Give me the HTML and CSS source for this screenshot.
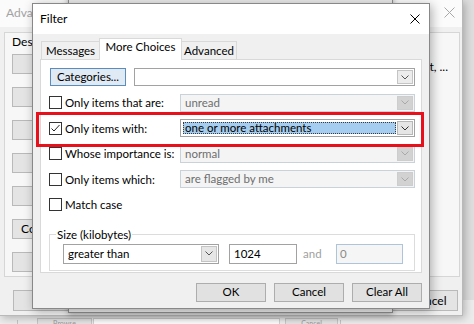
FILE: index.html
```html
<!DOCTYPE html>
<html>
<head>
<meta charset="utf-8">
<title>Filter</title>
<link rel="stylesheet" href="styles.css">
</head>
<body>
<div class="desk">
  <div class="lowwin">
    <span class="lowline"></span>
    <span class="lowbtn lb1">Browse</span>
    <span class="lowfield"></span>
    <span class="lowbtn lb2">Cancel</span>
    <span class="lowline"></span>
  </div>

  <div class="bgwin">
    <div class="bgtitle">
      <span class="bgname">Advanced Find</span>
      <svg class="bgx" width="11" height="11" viewBox="0 0 11 11"><path d="M0.5 0.5L10.5 10.5M10.5 0.5L0.5 10.5" stroke="#a8a8a8" stroke-width="1" fill="none"/></svg>
    </div>
    <div class="bgpanel">
      <div class="bgleft">
        <div class="bglabel">Description</div>
        <div class="bgbtns">
          <span class="bgbtn"></span>
          <span class="bgbtn"></span>
          <span class="bgbtn"></span>
          <span class="bgbtn"></span>
          <span class="bgbtn"></span>
          <span class="bgbtn">Copy</span>
          <span class="bgbtn"></span>
        </div>
      </div>
      <div class="bgright"><span>Look for items with the text, ...</span></div>
    </div>
    <div class="bgfoot">
      <span class="bgbtn"></span>
      <span class="bgbtn bgcancel">Cancel</span>
    </div>
  </div>

  <div class="midwin"></div>

  <div class="dialog">
    <div class="dtitle">
      <span>Filter</span>
      <svg width="10" height="10" viewBox="0 0 10 10"><path d="M0.5 0.5L9.5 9.5M9.5 0.5L0.5 9.5" stroke="#000" stroke-width="1" fill="none"/></svg>
    </div>
    <div class="dbody">
      <div class="tabs">
        <span class="tab t1">Messages</span>
        <span class="tab t2 active">More Choices</span>
        <span class="tab t3">Advanced</span>
      </div>
      <div class="panel">
        <div class="row">
          <span class="catbtn">Categories...</span>
          <span class="combo">
            <span class="val"></span>
            <span class="arr"><svg width="8" height="5" viewBox="0 0 8 5"><path d="M0.5 0.5L4 4L7.5 0.5" stroke="#555" fill="none"/></svg></span>
          </span>
        </div>
        <div class="row">
          <span class="lbl"><span class="cb"></span>Only items that are:</span>
          <span class="combo dis">
            <span class="val">unread</span>
            <span class="arr"><svg width="8" height="5" viewBox="0 0 8 5"><path d="M0.5 0.5L4 4L7.5 0.5" stroke="#a9a9a9" fill="none"/></svg></span>
          </span>
        </div>
        <div class="row">
          <span class="lbl"><span class="cb"><svg width="11" height="11" viewBox="0 0 11 11"><path d="M1.5 5.5L4 8L9.5 2" stroke="#222" stroke-width="1" fill="none"/></svg></span>Only items with:</span>
          <span class="combo on">
            <span class="val"><span class="sel">one or more attachments</span></span>
            <span class="arr"><svg width="8" height="5" viewBox="0 0 8 5"><path d="M0.5 0.5L4 4L7.5 0.5" stroke="#333" fill="none"/></svg></span>
          </span>
        </div>
        <div class="row">
          <span class="lbl"><span class="cb"></span>Whose importance is:</span>
          <span class="combo dis">
            <span class="val">normal</span>
            <span class="arr"><svg width="8" height="5" viewBox="0 0 8 5"><path d="M0.5 0.5L4 4L7.5 0.5" stroke="#a9a9a9" fill="none"/></svg></span>
          </span>
        </div>
        <div class="row">
          <span class="lbl"><span class="cb"></span>Only items which:</span>
          <span class="combo dis">
            <span class="val">are flagged by me</span>
            <span class="arr"><svg width="8" height="5" viewBox="0 0 8 5"><path d="M0.5 0.5L4 4L7.5 0.5" stroke="#a9a9a9" fill="none"/></svg></span>
          </span>
        </div>
        <div class="row">
          <span class="lbl"><span class="cb"></span>Match case</span>
        </div>
        <fieldset class="size">
          <legend>Size (kilobytes)</legend>
          <div class="sizerow">
            <span class="combo szsel">
              <span class="val">greater than</span>
              <span class="arr"><svg width="8" height="5" viewBox="0 0 8 5"><path d="M0.5 0.5L4 4L7.5 0.5" stroke="#555" fill="none"/></svg></span>
            </span>
            <span class="field">1024</span>
            <span class="and">and</span>
            <span class="field fdis">0</span>
          </div>
        </fieldset>
      </div>
      <div class="foot">
        <span class="btn">OK</span>
        <span class="btn">Cancel</span>
        <span class="btn">Clear All</span>
      </div>
    </div>
    <div class="mark"></div>
  </div>
</div>
</body>
</html>
```
FILE: styles.css
```css
* { box-sizing: border-box; }
html, body { margin: 0; padding: 0; }
body {
  width: 474px;
  height: 324px;
  overflow: hidden;
  font-family: Lato, "Noto Sans", sans-serif;
  font-size: 11.5px;
  color: #000;
}
.desk {
  position: relative;
  width: 474px;
  height: 324px;
  overflow: hidden;
  background: #dedede;
}

/* lowest window, visible only at the bottom edge */
.lowwin {
  position: absolute;
  left: 0;
  top: 300px;
  width: 474px;
  height: 30px;
  background: #ececec;
  display: flex;
  align-items: flex-end;
  padding: 0 0 0 17px;
  font-size: 7px;
  color: #999;
}
.lowline { width: 1px; height: 10px; background: #c4c4c4; margin-right: 19px; }
.lowbtn {
  height: 12px;
  border: 1px solid #c6c6c6;
  background: #e4e4e4;
  text-align: center;
  line-height: 9px;
  overflow: hidden;
}
.lb1 { width: 55px; margin-right: 1px; }
.lowfield { width: 187px; height: 12px; border: 1px solid #cfcfcf; background: #fafafa; margin-right: 5px; }
.lb2 { width: 53px; margin-right: 2px; }

/* Advanced Find window behind */
.bgwin {
  position: absolute;
  left: 0;
  top: 0;
  width: 463px;
  height: 316px;
  background: #f0f0f0;
  border-right: 1px solid #b9b9b9;
  border-bottom: 1px solid #b9b9b9;
  box-shadow: 2px 2px 8px rgba(0,0,0,0.25);
  display: flex;
  flex-direction: column;
}
.bgtitle {
  height: 27px;
  background: #fbfbfb;
  display: flex;
  align-items: center;
  justify-content: space-between;
  padding: 0 7px 2px 6px;
  color: #a3a3a3;
  font-size: 12px;
}
.bgname { width: 26px; overflow: hidden; white-space: nowrap; }
.bgpanel {
  margin: 5px 2px 0 4px;
  height: 245px;
  border: 1px solid #d6d6d6;
  background: #f7f7f7;
  display: flex;
  justify-content: space-between;
}
.bgleft { padding: 2px 0 0 7px; display: flex; flex-direction: column; }
.bglabel { width: 20px; height: 14px; line-height: 14px; white-space: nowrap; overflow: hidden; font-size: 12px; }
.bgbtns { margin-top: 5px; display: flex; flex-direction: column; gap: 13px; }
.bgbtn {
  width: 75px;
  height: 20px;
  border: 1px solid #b9b9b9;
  background: #e4e4e4;
  line-height: 18px;
  padding-left: 8px;
  white-space: nowrap;
  font-size: 12px;
}
.bgright { padding: 26px 11px 0 0; white-space: nowrap; font-size: 12px; }
.bgfoot {
  margin-top: 13px;
  display: flex;
  justify-content: space-between;
  padding: 0 4px 0 13px;
}
.bgfoot .bgbtn { height: 21px; line-height: 19px; }
.bgcancel { padding-left: 27px; }

/* middle window, only its edges show */
.midwin {
  position: absolute;
  left: 68px;
  top: -10px;
  width: 325px;
  height: 323px;
  background: #e9e9e9;
  border: 1px solid #8d8d8d;
  box-shadow: 0 2px 6px rgba(0,0,0,0.3);
}

/* Filter dialog */
.dialog {
  position: absolute;
  left: 32px;
  top: 3px;
  width: 398px;
  height: 306px;
  border: 1px solid #888;
  background: #f0f0f0;
  box-shadow: 2px 2px 10px rgba(0,0,0,0.3);
  display: flex;
  flex-direction: column;
}
.dtitle {
  height: 30px;
  flex: none;
  background: #fff;
  display: flex;
  align-items: center;
  justify-content: space-between;
  padding: 0 9px 1px 7px;
  font-size: 12px;
}
.dbody {
  flex: 1;
  padding: 4px 7px 0 7px;
  display: flex;
  flex-direction: column;
}
.tabs {
  display: flex;
  align-items: flex-end;
  height: 21px;
  padding-left: 1px;
  position: relative;
  z-index: 1;
}
.tab {
  height: 18px;
  border: 1px solid #d9d9d9;
  border-bottom: 0;
  background: #f0f0f0;
  text-align: center;
  line-height: 17px;
  white-space: nowrap;
}
.t1 { width: 59px; }
.t2 { width: 83px; margin-left: -1px; }
.t3 { width: 56px; margin-left: -1px; }
.tab.active {
  height: 22px;
  margin-bottom: -1px;
  background: #fff;
  line-height: 16px;
  position: relative;
}
.panel {
  height: 214px;
  flex: none;
  border: 1px solid #d9d9d9;
  background: #fff;
  padding: 8px 6px 0 8px;
  display: flex;
  flex-direction: column;
  gap: 7.5px;
}
.row {
  display: flex;
  align-items: center;
  height: 18px;
}
.catbtn {
  width: 76px;
  height: 18px;
  flex: none;
  margin-left: 1px;
  margin-right: 8px;
  border: 1px solid #5b8cbb;
  background: #e0eaf4;
  display: flex;
  align-items: center;
  justify-content: center;
  padding-bottom: 1px;
}
.lbl {
  width: 131px;
  flex: none;
  display: flex;
  align-items: center;
  white-space: nowrap;
}
.cb {
  width: 13px;
  height: 13px;
  flex: none;
  border: 1px solid #333;
  background: #fff;
  margin-right: 3px;
  display: flex;
}
.combo {
  flex: 1;
  height: 18px;
  border: 1px solid #a2a2a2;
  background: #fff;
  display: flex;
  align-items: stretch;
  padding: 1px;
}
.val {
  flex: 1;
  padding-left: 3px;
  display: flex;
  align-items: center;
  white-space: nowrap;
  padding-bottom: 1px;
}
.arr {
  width: 16px;
  flex: none;
  border: 1px solid #c4c4c4;
  background: #ececec;
  display: flex;
  align-items: center;
  justify-content: center;
}
.combo.dis { border-color: #c9d2db; background: #f4f4f4; color: #6e6e6e; }
.combo.dis .arr { border-color: #cdcdcd; background: #d2d2d2; }
.combo.on .val { padding: 1px; }
.sel {
  flex: 1;
  height: 100%;
  background: #a5cdef;
  border: 1px dotted #3a3a3a;
  display: flex;
  align-items: center;
  padding-left: 1px;
  padding-bottom: 1px;
}
.combo.on .arr { border-color: #b7b7b7; background: #e6e6e6; }

.size {
  margin: 6.5px 0 0 0;
  padding: 2px 6px 6px 13px;
  border: 1px solid #dcdcdc;
  min-width: 0;
}
.size legend {
  padding: 0 1px;
  margin-left: -7px;
  line-height: 14px;
}
.sizerow { display: flex; align-items: center; }
.szsel { flex: none; width: 156px; height: 20px; }
.szsel .arr { background: #e6e6e6; }
.field {
  width: 68px;
  height: 20px;
  margin-left: 10px;
  border: 1px solid #a2a2a2;
  background: #fff;
  padding-left: 4px;
  line-height: 17px;
}
.and { margin-left: 6px; color: #a0a0a0; width: 33px; }
.field.fdis {
  width: 67px;
  margin-left: 0;
  border-color: #aec4da;
  background: #f5f5f5;
  color: #8a8a8a;
  padding-left: 3px;
}

.foot {
  margin-top: 10px;
  display: flex;
  justify-content: flex-end;
  gap: 8px;
}
.btn {
  width: 70px;
  height: 19px;
  border: 1px solid #adadad;
  background: #e1e1e1;
  text-align: center;
  line-height: 16px;
}

/* red annotation box */
.mark {
  position: absolute;
  left: 3px;
  top: 108px;
  width: 388px;
  height: 35px;
  border: 3px solid #e8101a;
  pointer-events: none;
}
```
